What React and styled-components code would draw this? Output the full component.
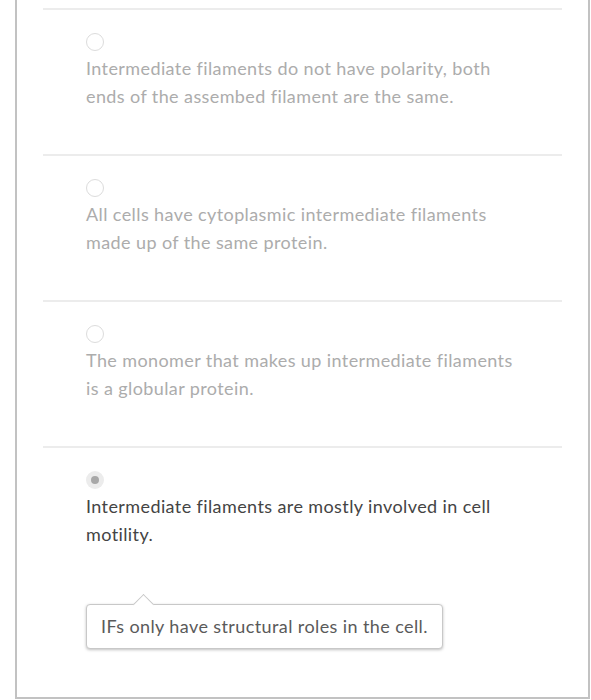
import styled, { createGlobalStyle } from "styled-components";

const Global = createGlobalStyle`
  body {
    margin: 0;
    background: #fff;
    font-family: Lato, "Open Sans", sans-serif;
  }
`;

const Panel = styled.div`
  margin-left: 15px;
  width: 575px;
  height: 699px;
  box-sizing: border-box;
  border: 2px solid #c2c2c2;
  border-top: none;
  padding: 8px 26px 0 26px;
`;

const Option = styled.div`
  border-top: 2px solid #ececec;
  padding: 23px 0 0 43px;
  height: 146px;
  box-sizing: border-box;
`;

const Radio = styled.span`
  display: block;
  width: 18px;
  height: 18px;
  border-radius: 50%;
  box-sizing: border-box;
  border: ${p => (p.$checked ? "none" : "1.5px solid #dcdcdc")};
  background: ${p => (p.$checked ? "#ececec" : "#fff")};
  position: relative;
  &::after {
    content: "";
    display: ${p => (p.$checked ? "block" : "none")};
    position: absolute;
    left: 5px;
    top: 5px;
    width: 8px;
    height: 8px;
    border-radius: 50%;
    background: #a8a8a8;
  }
`;

const Label = styled.p`
  margin: 3px 0 0;
  font-size: 18px;
  line-height: 28px;
  letter-spacing: 0.4px;
  color: ${p => (p.$active ? "#444" : "#acacac")};
  max-width: 436px;
`;

const Tip = styled.div`
  position: relative;
  display: inline-block;
  margin-top: 56px;
  padding: 9px 14px 10px 14px;
  font-size: 18px;
  line-height: 24px;
  letter-spacing: 0.4px;
  color: #5a5a5a;
  background: #fff;
  border: 1px solid #c8c8c8;
  border-radius: 4px;
  box-shadow: 0 1px 3px rgba(0, 0, 0, 0.25);
  &::before {
    content: "";
    position: absolute;
    left: 49px;
    top: -8px;
    width: 14px;
    height: 14px;
    background: #fff;
    border-left: 1px solid #c8c8c8;
    border-top: 1px solid #c8c8c8;
    transform: rotate(45deg);
  }
`;

const options = [
  "Intermediate filaments do not have polarity, both ends of the assembed filament are the same.",
  "All cells have cytoplasmic intermediate filaments made up of the same protein.",
  "The monomer that makes up intermediate filaments is a globular protein.",
];

export default function App() {
  return (
    <>
      <Global />
      <Panel>
        {options.map(t => (
          <Option key={t}>
            <Radio />
            <Label>{t}</Label>
          </Option>
        ))}
        <Option>
          <Radio $checked />
          <Label $active>Intermediate filaments are mostly involved in cell motility.</Label>
          <Tip>IFs only have structural roles in the cell.</Tip>
        </Option>
      </Panel>
    </>
  );
}
